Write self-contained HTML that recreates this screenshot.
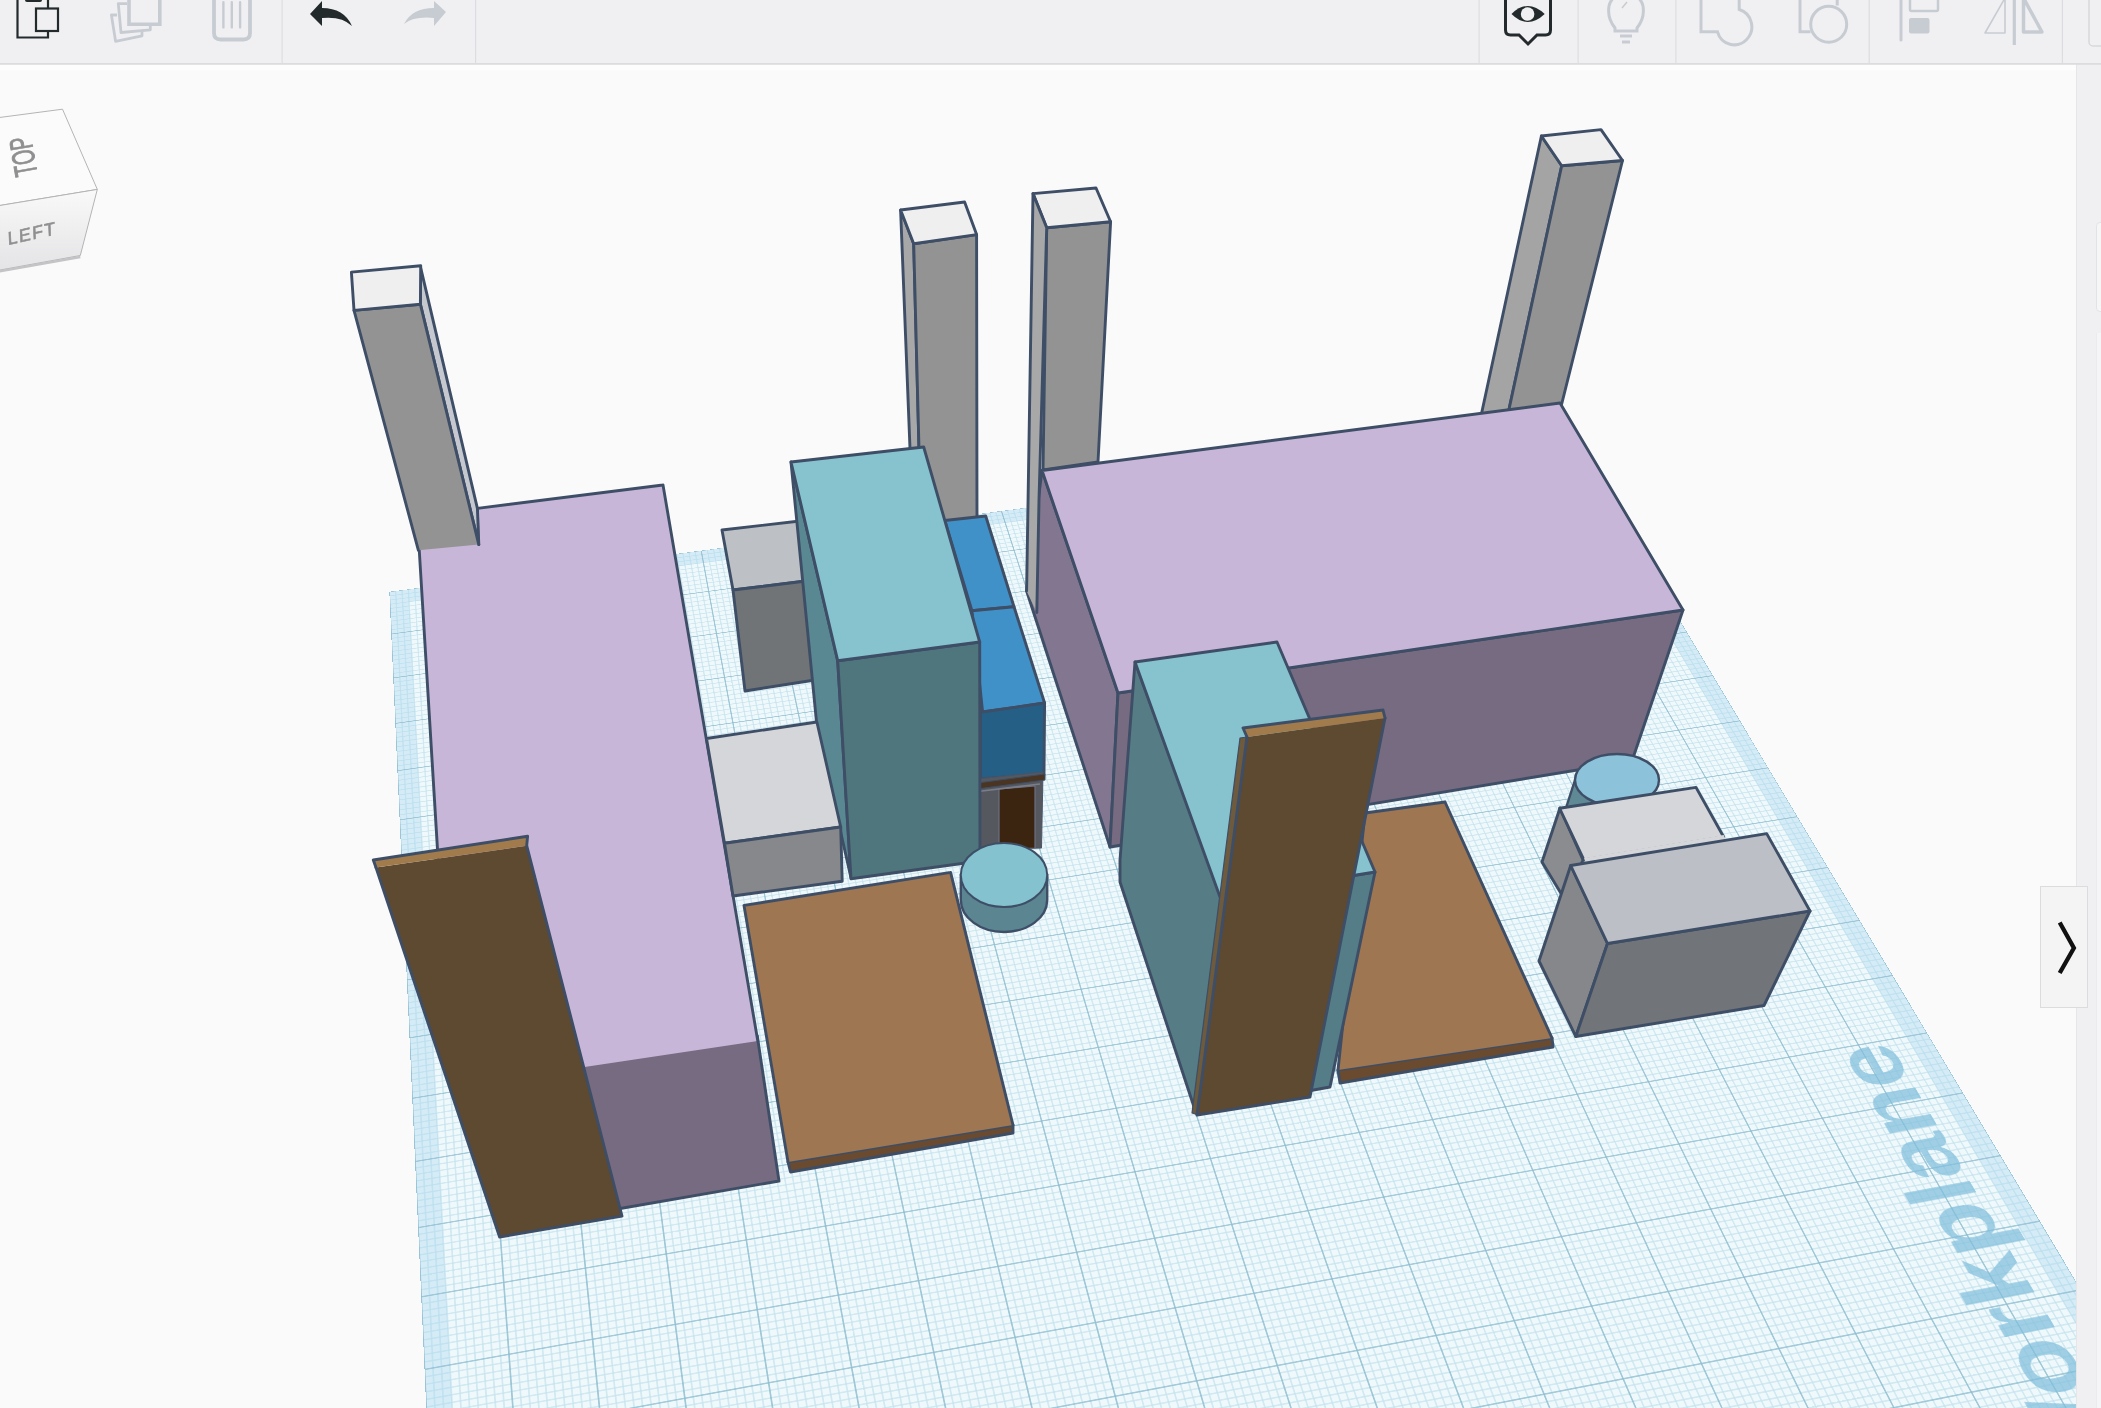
<!DOCTYPE html>
<html><head><meta charset="utf-8"><title>Tinkercad</title>
<style>
html,body{margin:0;padding:0;width:2101px;height:1408px;overflow:hidden;background:#fafafa;font-family:"Liberation Sans",sans-serif;}
#wp{position:absolute;left:0;top:0;width:2000px;height:2000px;transform-origin:0 0;transform:matrix3d(0.65085984,-0.06099559,0,0.0000387393,-0.05152111,0.30821523,0,-0.0001805638,0,0,1,0,389.332876,591.781829,0,1.00000000);}
svg{display:block}
</style></head><body>
<div id="wp"><svg width="2000" height="2000"><rect x="0" y="0" width="2000" height="2000" fill="#eff8fb"/><path d="M10 0V2000M0 10H2000M20 0V2000M0 20H2000M30 0V2000M0 30H2000M40 0V2000M0 40H2000M50 0V2000M0 50H2000M60 0V2000M0 60H2000M70 0V2000M0 70H2000M80 0V2000M0 80H2000M90 0V2000M0 90H2000M110 0V2000M0 110H2000M120 0V2000M0 120H2000M130 0V2000M0 130H2000M140 0V2000M0 140H2000M150 0V2000M0 150H2000M160 0V2000M0 160H2000M170 0V2000M0 170H2000M180 0V2000M0 180H2000M190 0V2000M0 190H2000M210 0V2000M0 210H2000M220 0V2000M0 220H2000M230 0V2000M0 230H2000M240 0V2000M0 240H2000M250 0V2000M0 250H2000M260 0V2000M0 260H2000M270 0V2000M0 270H2000M280 0V2000M0 280H2000M290 0V2000M0 290H2000M310 0V2000M0 310H2000M320 0V2000M0 320H2000M330 0V2000M0 330H2000M340 0V2000M0 340H2000M350 0V2000M0 350H2000M360 0V2000M0 360H2000M370 0V2000M0 370H2000M380 0V2000M0 380H2000M390 0V2000M0 390H2000M410 0V2000M0 410H2000M420 0V2000M0 420H2000M430 0V2000M0 430H2000M440 0V2000M0 440H2000M450 0V2000M0 450H2000M460 0V2000M0 460H2000M470 0V2000M0 470H2000M480 0V2000M0 480H2000M490 0V2000M0 490H2000M510 0V2000M0 510H2000M520 0V2000M0 520H2000M530 0V2000M0 530H2000M540 0V2000M0 540H2000M550 0V2000M0 550H2000M560 0V2000M0 560H2000M570 0V2000M0 570H2000M580 0V2000M0 580H2000M590 0V2000M0 590H2000M610 0V2000M0 610H2000M620 0V2000M0 620H2000M630 0V2000M0 630H2000M640 0V2000M0 640H2000M650 0V2000M0 650H2000M660 0V2000M0 660H2000M670 0V2000M0 670H2000M680 0V2000M0 680H2000M690 0V2000M0 690H2000M710 0V2000M0 710H2000M720 0V2000M0 720H2000M730 0V2000M0 730H2000M740 0V2000M0 740H2000M750 0V2000M0 750H2000M760 0V2000M0 760H2000M770 0V2000M0 770H2000M780 0V2000M0 780H2000M790 0V2000M0 790H2000M810 0V2000M0 810H2000M820 0V2000M0 820H2000M830 0V2000M0 830H2000M840 0V2000M0 840H2000M850 0V2000M0 850H2000M860 0V2000M0 860H2000M870 0V2000M0 870H2000M880 0V2000M0 880H2000M890 0V2000M0 890H2000M910 0V2000M0 910H2000M920 0V2000M0 920H2000M930 0V2000M0 930H2000M940 0V2000M0 940H2000M950 0V2000M0 950H2000M960 0V2000M0 960H2000M970 0V2000M0 970H2000M980 0V2000M0 980H2000M990 0V2000M0 990H2000M1010 0V2000M0 1010H2000M1020 0V2000M0 1020H2000M1030 0V2000M0 1030H2000M1040 0V2000M0 1040H2000M1050 0V2000M0 1050H2000M1060 0V2000M0 1060H2000M1070 0V2000M0 1070H2000M1080 0V2000M0 1080H2000M1090 0V2000M0 1090H2000M1110 0V2000M0 1110H2000M1120 0V2000M0 1120H2000M1130 0V2000M0 1130H2000M1140 0V2000M0 1140H2000M1150 0V2000M0 1150H2000M1160 0V2000M0 1160H2000M1170 0V2000M0 1170H2000M1180 0V2000M0 1180H2000M1190 0V2000M0 1190H2000M1210 0V2000M0 1210H2000M1220 0V2000M0 1220H2000M1230 0V2000M0 1230H2000M1240 0V2000M0 1240H2000M1250 0V2000M0 1250H2000M1260 0V2000M0 1260H2000M1270 0V2000M0 1270H2000M1280 0V2000M0 1280H2000M1290 0V2000M0 1290H2000M1310 0V2000M0 1310H2000M1320 0V2000M0 1320H2000M1330 0V2000M0 1330H2000M1340 0V2000M0 1340H2000M1350 0V2000M0 1350H2000M1360 0V2000M0 1360H2000M1370 0V2000M0 1370H2000M1380 0V2000M0 1380H2000M1390 0V2000M0 1390H2000M1410 0V2000M0 1410H2000M1420 0V2000M0 1420H2000M1430 0V2000M0 1430H2000M1440 0V2000M0 1440H2000M1450 0V2000M0 1450H2000M1460 0V2000M0 1460H2000M1470 0V2000M0 1470H2000M1480 0V2000M0 1480H2000M1490 0V2000M0 1490H2000M1510 0V2000M0 1510H2000M1520 0V2000M0 1520H2000M1530 0V2000M0 1530H2000M1540 0V2000M0 1540H2000M1550 0V2000M0 1550H2000M1560 0V2000M0 1560H2000M1570 0V2000M0 1570H2000M1580 0V2000M0 1580H2000M1590 0V2000M0 1590H2000M1610 0V2000M0 1610H2000M1620 0V2000M0 1620H2000M1630 0V2000M0 1630H2000M1640 0V2000M0 1640H2000M1650 0V2000M0 1650H2000M1660 0V2000M0 1660H2000M1670 0V2000M0 1670H2000M1680 0V2000M0 1680H2000M1690 0V2000M0 1690H2000M1710 0V2000M0 1710H2000M1720 0V2000M0 1720H2000M1730 0V2000M0 1730H2000M1740 0V2000M0 1740H2000M1750 0V2000M0 1750H2000M1760 0V2000M0 1760H2000M1770 0V2000M0 1770H2000M1780 0V2000M0 1780H2000M1790 0V2000M0 1790H2000M1810 0V2000M0 1810H2000M1820 0V2000M0 1820H2000M1830 0V2000M0 1830H2000M1840 0V2000M0 1840H2000M1850 0V2000M0 1850H2000M1860 0V2000M0 1860H2000M1870 0V2000M0 1870H2000M1880 0V2000M0 1880H2000M1890 0V2000M0 1890H2000M1910 0V2000M0 1910H2000M1920 0V2000M0 1920H2000M1930 0V2000M0 1930H2000M1940 0V2000M0 1940H2000M1950 0V2000M0 1950H2000M1960 0V2000M0 1960H2000M1970 0V2000M0 1970H2000M1980 0V2000M0 1980H2000M1990 0V2000M0 1990H2000" stroke="#c8e3ee" stroke-width="1.5" fill="none"/><path d="M0 0H2000V2000H0Z M30 30V1970H1970V30Z" fill="#a6d5ee" fill-opacity="0.36" fill-rule="evenodd"/><path d="M0 0V2000M0 0H2000M100 0V2000M0 100H2000M200 0V2000M0 200H2000M300 0V2000M0 300H2000M400 0V2000M0 400H2000M500 0V2000M0 500H2000M600 0V2000M0 600H2000M700 0V2000M0 700H2000M800 0V2000M0 800H2000M900 0V2000M0 900H2000M1000 0V2000M0 1000H2000M1100 0V2000M0 1100H2000M1200 0V2000M0 1200H2000M1300 0V2000M0 1300H2000M1400 0V2000M0 1400H2000M1500 0V2000M0 1500H2000M1600 0V2000M0 1600H2000M1700 0V2000M0 1700H2000M1800 0V2000M0 1800H2000M1900 0V2000M0 1900H2000M2000 0V2000M0 2000H2000" stroke="#8cbccf" stroke-width="1.6" fill="none"/><text transform="translate(1942,1943) rotate(-90)" font-family="Liberation Sans" font-weight="bold" font-size="126" fill="#7fbddc" fill-opacity="0.7">Workplane</text></svg></div>
<svg width="2101" height="1408" style="position:absolute;left:0;top:0"><polygon points="560.0,1070.0 757.3,1036.0 779.0,1181.0 600.0,1212.0" fill="#776b82" /><path d="M757.3 1036.0L779.0 1181.0M779.0 1181.0L600.0 1212.0M600.0 1212.0L560.0 1070.0" fill="none" stroke="#3e4e66" stroke-width="2.90" stroke-linecap="round"/><polygon points="419.0,546.0 478.0,540.0 477.4,508.4 663.0,485.0 757.8,1041.0 452.0,1087.0" fill="#c8b6d8" /><path d="M478.0 540.0L477.4 508.4M477.4 508.4L663.0 485.0M663.0 485.0L757.8 1041.0M452.0 1087.0L419.0 546.0" fill="none" stroke="#3e4e66" stroke-width="2.90" stroke-linecap="round"/><polygon points="420.7,267.9 477.4,508.4 478.8,544.6 420.4,304.3" fill="#c5c9cf" stroke="#3e4e66" stroke-width="2.90" stroke-linejoin="round" /><polygon points="354.0,310.4 420.4,304.3 478.8,544.6 418.4,550.3" fill="#939393" /><path d="M354.0 310.4L420.4 304.3M420.4 304.3L478.8 544.6M418.4 550.3L354.0 310.4" fill="none" stroke="#3e4e66" stroke-width="2.90" stroke-linecap="round"/><polygon points="351.4,272.1 420.7,265.7 420.4,304.3 354.0,310.4" fill="#efeff0" stroke="#3e4e66" stroke-width="2.90" stroke-linejoin="round" /><polygon points="900.6,210.0 913.7,243.7 921.0,525.0 913.0,525.0" fill="#a8a8a8" stroke="#3e4e66" stroke-width="2.90" stroke-linejoin="round" /><polygon points="913.7,243.7 976.6,234.6 977.0,525.0 921.0,527.0" fill="#939393" stroke="#3e4e66" stroke-width="2.90" stroke-linejoin="round" /><polygon points="900.6,210.0 964.6,202.0 976.6,234.6 913.7,243.7" fill="#efeff0" stroke="#3e4e66" stroke-width="2.90" stroke-linejoin="round" /><polygon points="722.0,530.0 800.0,521.0 806.0,581.0 733.0,590.0" fill="#bdc0c5" stroke="#3e4e66" stroke-width="2.90" stroke-linejoin="round" /><polygon points="733.0,590.0 806.0,581.0 815.0,680.0 745.0,691.0" fill="#717477" stroke="#3e4e66" stroke-width="2.90" stroke-linejoin="round" /><polygon points="944.8,520.5 985.7,516.0 1014.0,606.8 972.0,610.8" fill="#4191c9" stroke="#3e4e66" stroke-width="2.90" stroke-linejoin="round" /><polygon points="972.0,610.8 1014.0,606.8 1044.6,703.0 982.6,712.0" fill="#4191c9" stroke="#3e4e66" stroke-width="2.90" stroke-linejoin="round" /><polygon points="980.5,712.3 1044.6,703.0 1044.0,774.0 980.5,779.0" fill="#255f86" stroke="#3e4e66" stroke-width="2.90" stroke-linejoin="round" /><polygon points="977.5,779.0 1043.0,772.0 1041.5,848.0 977.5,850.0" fill="#56585f" stroke="#4a5568" stroke-width="1.00" stroke-linejoin="round" /><polygon points="999.0,789.0 1035.0,786.0 1035.0,848.0 999.0,850.0" fill="#3b2510" stroke="#6b7080" stroke-width="1.20" stroke-linejoin="round" /><polygon points="977.0,783.0 1045.0,774.0 1045.0,780.0 977.0,789.0" fill="#4a3522" stroke="#3e4e66" stroke-width="1.00" stroke-linejoin="round" /><path d="M978 791.5L1040 784" stroke="#7a7e8a" stroke-width="1.6"/><polygon points="791.0,462.0 837.7,660.7 851.0,878.0 817.0,727.0" fill="#5a8892" stroke="#3e4e66" stroke-width="2.90" stroke-linejoin="round" /><polygon points="837.7,660.7 979.7,642.0 980.0,861.0 851.0,878.7" fill="#4f767d" stroke="#3e4e66" stroke-width="2.90" stroke-linejoin="round" /><polygon points="791.0,462.0 923.7,447.0 979.7,642.0 837.7,660.7" fill="#86c3cf" stroke="#3e4e66" stroke-width="2.90" stroke-linejoin="round" /><polygon points="706.5,738.5 816.9,722.0 840.7,827.0 724.5,843.3" fill="#d5d6d9" stroke="#3e4e66" stroke-width="2.90" stroke-linejoin="round" /><polygon points="724.5,843.3 840.7,827.0 842.2,881.3 733.0,896.0" fill="#87888b" stroke="#3e4e66" stroke-width="2.90" stroke-linejoin="round" /><path d="M960.8 875 L960.8 900 A43.2 32 0 0 0 1047.2 900 L1047.2 875 Z" fill="#5a8591" stroke="#3e4e66" stroke-width="2.4"/><ellipse cx="1004" cy="875" rx="43.2" ry="32" fill="#84c2cf" stroke="#3e4e66" stroke-width="2"/><polygon points="790.5,1172.0 1013.0,1133.0 1013.0,1125.0 788.0,1162.0" fill="#6a4b30" stroke="#3e4e66" stroke-width="2.90" stroke-linejoin="round" /><polygon points="744.0,905.4 950.6,872.4 1013.0,1125.0 788.0,1162.0" fill="#9e7651" /><path d="M744.0 905.4L950.6 872.4M950.6 872.4L1013.0 1125.0M788.0 1162.0L744.0 905.4" fill="none" stroke="#3e4e66" stroke-width="2.90" stroke-linecap="round"/><polygon points="376.0,867.6 526.7,845.7 622.0,1216.0 499.6,1237.0" fill="#5e4931" /><path d="M526.7 845.7L622.0 1216.0M622.0 1216.0L499.6 1237.0M499.6 1237.0L376.0 867.6" fill="none" stroke="#3e4e66" stroke-width="2.90" stroke-linecap="round"/><polygon points="373.3,860.0 527.6,836.2 526.7,845.7 376.0,867.6" fill="#a27b4d" /><path d="M373.3 860.0L527.6 836.2M527.6 836.2L526.7 845.7M376.0 867.6L373.3 860.0" fill="none" stroke="#3e4e66" stroke-width="2.90" stroke-linecap="round"/><polygon points="1541.4,136.0 1561.7,165.8 1508.0,414.0 1481.0,416.0" fill="#a4a4a4" /><path d="M1541.4 136.0L1561.7 165.8M1561.7 165.8L1508.0 414.0M1481.0 416.0L1541.4 136.0" fill="none" stroke="#3e4e66" stroke-width="2.90" stroke-linecap="round"/><polygon points="1561.7,165.8 1622.5,160.5 1561.7,404.0 1508.0,414.0" fill="#939393" /><path d="M1561.7 165.8L1622.5 160.5M1622.5 160.5L1561.7 404.0M1508.0 414.0L1561.7 165.8" fill="none" stroke="#3e4e66" stroke-width="2.90" stroke-linecap="round"/><polygon points="1541.4,136.0 1601.0,129.6 1622.5,160.5 1561.7,165.8" fill="#efeff0" stroke="#3e4e66" stroke-width="2.90" stroke-linejoin="round" /><polygon points="1046.7,227.7 1110.6,221.8 1098.0,462.0 1043.0,470.0" fill="#939393" stroke="#3e4e66" stroke-width="2.90" stroke-linejoin="round" /><polygon points="1033.0,193.6 1096.0,188.0 1110.6,221.8 1046.7,227.7" fill="#efeff0" stroke="#3e4e66" stroke-width="2.90" stroke-linejoin="round" /><polygon points="1042.0,470.5 1118.0,693.0 1110.0,847.0 1026.6,591.0" fill="#827690" stroke="#3e4e66" stroke-width="2.90" stroke-linejoin="round" /><polygon points="1118.0,693.0 1683.0,610.0 1632.0,761.0 1110.0,847.0" fill="#776b82" stroke="#3e4e66" stroke-width="2.90" stroke-linejoin="round" /><polygon points="1042.0,470.5 1560.0,403.0 1683.0,610.0 1118.0,693.0" fill="#c8b6d8" stroke="#3e4e66" stroke-width="2.90" stroke-linejoin="round" /><polygon points="1033.0,193.6 1046.7,227.7 1039.0,500.0 1036.8,612.5 1026.6,591.0" fill="#a8a8a8" /><path d="M1033.0 193.6L1046.7 227.7M1046.7 227.7L1039.0 500.0M1039.0 500.0L1036.8 612.5M1026.6 591.0L1033.0 193.6" fill="none" stroke="#3e4e66" stroke-width="2.90" stroke-linecap="round"/><path d="M1575 780 L1566 808 L1600 830 L1640 800 Z" fill="#5f8a95" stroke="#3e4e66" stroke-width="2.4"/><ellipse cx="1617" cy="780" rx="42" ry="26" fill="#8cc2da" stroke="#3e4e66" stroke-width="2.4"/><polygon points="1542.0,862.0 1560.0,808.0 1583.0,860.0 1565.0,900.0" fill="#8a8c8f" stroke="#3e4e66" stroke-width="2.90" stroke-linejoin="round" /><polygon points="1559.6,808.3 1696.0,787.4 1723.7,837.0 1584.0,860.0" fill="#d5d6d9" stroke="#3e4e66" stroke-width="2.90" stroke-linejoin="round" /><polygon points="1584.0,858.0 1723.7,835.0 1730.0,850.0 1590.0,875.0" fill="#d5d6d9" stroke="#3e4e66" stroke-width="0.00" stroke-linejoin="round" /><polygon points="1539.0,961.0 1570.7,865.5 1607.5,943.5 1575.8,1036.5" fill="#85878a" stroke="#3e4e66" stroke-width="2.90" stroke-linejoin="round" /><polygon points="1607.5,943.5 1810.0,911.0 1764.0,1005.5 1575.8,1036.5" fill="#717478" stroke="#3e4e66" stroke-width="2.90" stroke-linejoin="round" /><polygon points="1570.7,865.5 1766.7,833.6 1810.0,911.0 1607.5,943.5" fill="#bcbfc5" stroke="#3e4e66" stroke-width="2.90" stroke-linejoin="round" /><polygon points="1340.0,1083.0 1553.0,1047.0 1552.0,1038.0 1338.0,1070.0" fill="#6a4b30" stroke="#3e4e66" stroke-width="2.90" stroke-linejoin="round" /><polygon points="1365.0,813.0 1445.0,802.0 1552.0,1038.0 1338.0,1070.0" fill="#9e7651" /><path d="M1365.0 813.0L1445.0 802.0M1445.0 802.0L1552.0 1038.0M1338.0 1070.0L1365.0 813.0" fill="none" stroke="#3e4e66" stroke-width="2.90" stroke-linecap="round"/><polygon points="1135.0,662.0 1221.5,896.5 1196.0,1113.0 1120.0,882.0 1120.0,860.0" fill="#567c85" stroke="#3e4e66" stroke-width="2.90" stroke-linejoin="round" /><polygon points="1240.0,894.0 1375.0,872.0 1330.0,1087.0 1205.0,1110.0" fill="#547d87" stroke="#3e4e66" stroke-width="2.90" stroke-linejoin="round" /><polygon points="1135.0,662.0 1277.0,642.0 1375.0,872.0 1220.0,897.0" fill="#86c3cf" stroke="#3e4e66" stroke-width="2.90" stroke-linejoin="round" /><polygon points="1240.0,738.0 1247.0,737.0 1199.0,1115.0 1192.0,1113.0" fill="#6e5a3c" stroke="#3e4e66" stroke-width="1.20" stroke-linejoin="round" /><polygon points="1247.0,737.0 1385.0,718.0 1310.0,1097.0 1197.0,1115.0" fill="#5e4931" /><path d="M1385.0 718.0L1310.0 1097.0M1310.0 1097.0L1197.0 1115.0M1197.0 1115.0L1247.0 737.0" fill="none" stroke="#3e4e66" stroke-width="2.90" stroke-linecap="round"/><polygon points="1243.0,728.0 1383.0,710.0 1385.0,718.0 1247.0,737.0" fill="#a27b4d" /><path d="M1243.0 728.0L1383.0 710.0M1383.0 710.0L1385.0 718.0M1247.0 737.0L1243.0 728.0" fill="none" stroke="#3e4e66" stroke-width="2.90" stroke-linecap="round"/></svg>
<svg width="120" height="300" style="position:absolute;left:0;top:0"><defs><linearGradient id="lf" x1="0" y1="0" x2="0" y2="1"><stop offset="0" stop-color="#f9f9f9"/><stop offset="1" stop-color="#e4e4e6"/></linearGradient></defs><polygon points="-2,117.7 62.5,109.2 97.3,189.4 -2,205.8" fill="#fbfbfb" stroke="#b4b4b6" stroke-width="1"/><polygon points="-2,205.8 97.3,189.4 80.3,255.5 -2,270.4" fill="url(#lf)" stroke="#b4b4b6" stroke-width="1"/><path d="M-2 271.5L80.3 257" stroke="#c4c4c6" stroke-width="2.5"/><text transform="translate(37.5,174) rotate(-100) scale(0.6,1)" font-family="Liberation Sans" font-size="32" fill="#8f8f91" stroke="#8f8f91" stroke-width="0.9">TOP</text><text transform="translate(8,245) rotate(-12.5) skewX(-10)" font-family="Liberation Sans" font-size="18" fill="#8f8f91" stroke="#8f8f91" stroke-width="0.6" letter-spacing="1.5">LEFT</text></svg>
<div style="position:absolute;left:2076px;top:64px;width:25px;height:1344px;background:#f0f0f2;border-left:1px solid #e6e6e8"></div><div style="position:absolute;left:2096px;top:222px;width:10px;height:88px;border:1px solid #e2e3e6;border-radius:4px;background:#f6f6f7"></div><div style="position:absolute;left:2096px;top:333px;width:10px;height:1100px;background:#f5f5f7;border-left:1px solid #ebebee"></div><div style="position:absolute;left:2040px;top:886px;width:48px;height:122px;background:#f4f4f5;border:1.5px solid #dcdcde;box-sizing:border-box"></div><svg width="40" height="70" style="position:absolute;left:2050px;top:912px"><path d="M9.7 10.5L23.9 36L9.7 61" fill="none" stroke="#111" stroke-width="4.3" stroke-linejoin="miter"/></svg>
<svg width="2101" height="71" style="position:absolute;left:0;top:0"><rect x="0" y="0" width="2101" height="63" fill="#f0f0f2"/><rect x="0" y="64.8" width="2076" height="5.5" fill="#fdfdfd"/><rect x="0" y="63" width="2101" height="1.8" fill="#dcdcdf"/><rect x="281.5" y="0" width="1.2" height="63" fill="#dcdde0"/><rect x="475.0" y="0" width="1.2" height="63" fill="#dcdde0"/><rect x="1478.5" y="0" width="1.2" height="63" fill="#dcdde0"/><rect x="1577.5" y="0" width="1.2" height="63" fill="#dcdde0"/><rect x="1675.3" y="0" width="1.2" height="63" fill="#dcdde0"/><rect x="1868.6" y="0" width="1.2" height="63" fill="#dcdde0"/><rect x="2061.8" y="0" width="1.2" height="63" fill="#dcdde0"/><path d="M17.5 0V37.5H48V0" fill="none" stroke="#222a2c" stroke-width="2.2"/><rect x="36" y="8.5" width="22" height="22.5" fill="#f0f0f2" stroke="#222a2c" stroke-width="2.2"/><rect x="25" y="-3" width="17" height="5" rx="2" fill="#222a2c"/><path d="M129 -4V24.3H159.8V-4" fill="none" stroke="#c7ccd3" stroke-width="3.6"/><path d="M127 3.6H118.3L121 32.5L150.3 29.8V25.5" fill="none" stroke="#c7ccd3" stroke-width="2.8" stroke-linejoin="round"/><path d="M117 15H111.4L115.6 41.4L142 35.8V32" fill="none" stroke="#c7ccd3" stroke-width="2.8" stroke-linejoin="round"/><path d="M214 -2V33Q214 39.5 220.5 39.5H243.5Q250 39.5 250 33V-2" fill="none" stroke="#c7ccd3" stroke-width="3.8"/><path d="M223.4 2.3V27.4M231.8 2.3V27.4M240.1 2.3V27.4" fill="none" stroke="#c7ccd3" stroke-width="2.4" stroke-linecap="round"/><path d="M310 14L322 1V8Q344 8 352 26Q342 16 322 18V26Z" fill="#222a2c"/><path d="M446 12L434 1V8Q412 8 404 24Q414 16 434 18V26Z" fill="#c7ccd3"/><path d="M1505.5 -5V30Q1505.5 35 1510.5 35H1519L1528 44L1537 35H1545.5Q1550.5 35 1550.5 30V-5" fill="none" stroke="#222a2c" stroke-width="3"/><path d="M1511.5 14Q1527.6 -2 1544.7 14Q1527.6 30 1511.5 14Z" fill="#222a2c"/><circle cx="1527.6" cy="14" r="6.8" fill="#f0f0f2"/><path d="M1615 28Q1607 18 1609 6Q1612 -6 1626 -7Q1640 -6 1643 6Q1645 18 1637 28V31H1615Z" fill="none" stroke="#c7ccd3" stroke-width="3"/><path d="M1620 36H1632M1622 42H1630" fill="none" stroke="#c7ccd3" stroke-width="3"/><path d="M1622 8L1627 2" fill="none" stroke="#c7ccd3" stroke-width="1.5"/><path d="M1701 -3V31.8H1717.5A17.5 18 0 1 0 1739.2 9.5V-3" fill="none" stroke="#c7ccd3" stroke-width="3"/><path d="M1800 -3V31.8H1810.5M1837.2 -3V5.5" fill="none" stroke="#c7ccd3" stroke-width="3"/><circle cx="1828.7" cy="24.3" r="18" fill="none" stroke="#c7ccd3" stroke-width="3"/><path d="M1901 -2V40" fill="none" stroke="#c7ccd3" stroke-width="3" stroke-linecap="round"/><rect x="1910" y="-4" width="28" height="15" rx="1.5" fill="none" stroke="#c7ccd3" stroke-width="2.5"/><rect x="1909" y="18" width="20.5" height="15.5" rx="2" fill="#c7ccd3"/><path d="M2005 -2V33H1985Z" fill="none" stroke="#c7ccd3" stroke-width="1.6" stroke-linejoin="round"/><path d="M2014.3 -2V45" fill="none" stroke="#c7ccd3" stroke-width="3.2"/><path d="M2023.5 -2V32H2042Z" fill="none" stroke="#c7ccd3" stroke-width="3.5" stroke-linejoin="round"/><rect x="2089" y="-10" width="30" height="56" rx="4" fill="none" stroke="#d5d8dd" stroke-width="1.5"/></svg>
</body></html>
